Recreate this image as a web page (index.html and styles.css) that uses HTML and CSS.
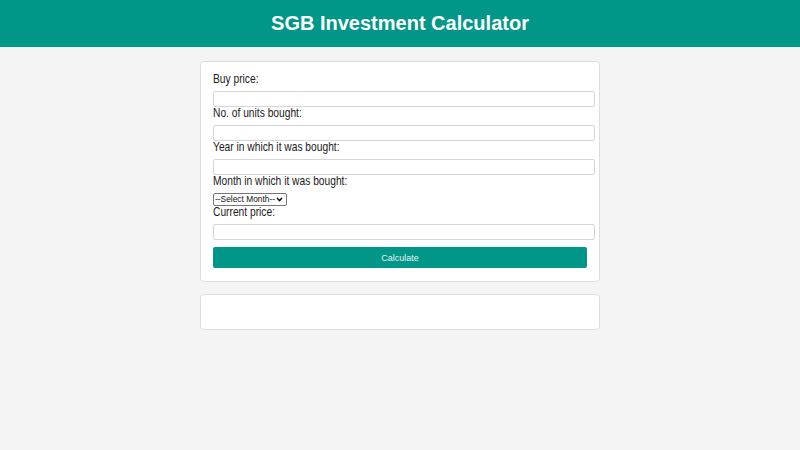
FILE: index.html
```html
<!DOCTYPE html>
<html lang="en">
<head>
<meta charset="utf-8">
<title>SGB Investment Calculator</title>
<link rel="stylesheet" href="styles.css">
</head>
<body>
<header class="topbar">
  <h1 class="title">SGB Investment Calculator</h1>
</header>
<main class="page">
  <form class="card form-card">
    <label class="field-label" for="buy">Buy price:</label>
    <input class="field-input" id="buy" type="text">
    <label class="field-label" for="units">No. of units bought:</label>
    <input class="field-input" id="units" type="text">
    <label class="field-label" for="year">Year in which it was bought:</label>
    <input class="field-input" id="year" type="text">
    <label class="field-label" for="month">Month in which it was bought:</label>
    <select class="field-select" id="month">
      <option>--Select Month--</option>
    </select>
    <label class="field-label" for="current">Current price:</label>
    <input class="field-input" id="current" type="text">
    <button class="calc-btn" type="button">Calculate</button>
  </form>
  <section class="card result-card"></section>
</main>
</body>
</html>
```
FILE: styles.css
```css
html, body {
  margin: 0;
  padding: 0;
}
body {
  background: #f4f4f4;
  font-family: "Liberation Sans", Arial, sans-serif;
  color: #222;
}
.topbar {
  background: #009688;
  height: 47px;
  display: flex;
  align-items: center;
  justify-content: center;
}
.title {
  margin: 0;
  color: #fff;
  font-size: 20px;
  font-weight: bold;
}
.page {
  display: flex;
  flex-direction: column;
  align-items: center;
  padding-top: 14px;
  gap: 12px;
}
.card {
  width: 400px;
  box-sizing: border-box;
  background: #fff;
  border: 1px solid #dcdcdc;
  border-radius: 4px;
}
.form-card {
  display: flex;
  flex-direction: column;
  align-items: flex-start;
  padding: 11px 12px 13px;
}
.field-label {
  display: block;
  font-size: 12.2px;
  line-height: 12px;
  margin-bottom: 6px;
  color: #1a1a1a;
  transform: scaleX(0.84);
  transform-origin: left center;
}
.field-input {
  box-sizing: border-box;
  width: 382px;
  height: 16px;
  margin: 0;
  padding: 0 4px;
  border: 1px solid #d6d6d6;
  border-radius: 2px;
  background: #fff;
  font-size: 10px;
}
.field-select {
  box-sizing: border-box;
  -webkit-appearance: none;
  appearance: none;
  width: 74px;
  height: 13px;
  margin: 0;
  padding: 0 10px 0 1px;
  font-family: "Liberation Sans", Arial, sans-serif;
  font-size: 8.4px;
  line-height: 11px;
  border: 1px solid #767676;
  border-radius: 2px;
  background-color: #fff;
  background-image: url("data:image/svg+xml,%3Csvg xmlns='http://www.w3.org/2000/svg' width='7' height='5' viewBox='0 0 7 5'%3E%3Cpath d='M1 1 L3.5 3.6 L6 1' fill='none' stroke='%23111' stroke-width='1.5'/%3E%3C/svg%3E");
  background-repeat: no-repeat;
  background-position: right 3px center;
  color: #111;
}
.calc-btn {
  margin-top: 7px;
  width: 374px;
  height: 21px;
  border: none;
  border-radius: 2px;
  background: #009688;
  color: #e8f5f3;
  font-family: "Liberation Sans", Arial, sans-serif;
  font-size: 9px;
}
.result-card {
  height: 36px;
}
```
